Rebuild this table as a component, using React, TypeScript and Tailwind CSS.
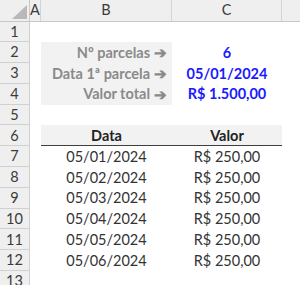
const font = { fontFamily: "Lato, 'Open Sans', sans-serif" };

const parcelas = [
  "05/01/2024",
  "05/02/2024",
  "05/03/2024",
  "05/04/2024",
  "05/05/2024",
  "05/06/2024",
];

const RowNum = ({ n }: { n: number }) => (
  <div className="w-[30px] shrink-0 h-full bg-[#efefef] border-r border-b border-[#d0d0d0] flex items-center justify-center text-[14.5px] text-[#3b3b3b]">
    {n}
  </div>
);

const Row = ({ n, b, c, bClass = "", cClass = "" }: { n: number; b?: React.ReactNode; c?: React.ReactNode; bClass?: string; cClass?: string }) => (
  <div className="flex h-[20.8px]">
    <RowNum n={n} />
    <div className="w-[11px] shrink-0" />
    <div className={"w-[131px] shrink-0 flex items-center " + bClass}>{b}</div>
    <div className={"w-[110px] shrink-0 flex items-center justify-center " + cClass}>{c}</div>
    <div className="flex-1" />
  </div>
);

const Label = ({ text }: { text: string }) => (
  <div className="w-full flex justify-end items-center pr-[5px] gap-[4px] font-bold text-[#8a8a8a] text-[14.5px]">
    <span>{text}</span>
    <span className="text-[15px]">➔</span>
  </div>
);

export default function App() {
  return (
    <div className="w-[300px] h-[285px] bg-white overflow-hidden" style={font}>
      {/* column headers */}
      <div className="flex h-[21.5px] bg-[#efefef] border-b border-[#c8c8c8] text-[14.5px] text-[#3b3b3b]">
        <div className="w-[30px] shrink-0 border-r border-[#c8c8c8] relative">
          <svg className="absolute left-[12px] top-[5px]" width="15" height="14" viewBox="0 0 15 14">
            <polygon points="15,0 15,14 0,14" fill="#b9b9b9" />
          </svg>
        </div>
        <div className="w-[11px] shrink-0 border-r border-[#d4d4d4] flex items-center justify-center">A</div>
        <div className="w-[131px] shrink-0 border-r border-[#d4d4d4] flex items-center justify-center">B</div>
        <div className="w-[110px] shrink-0 border-r border-[#d4d4d4] flex items-center justify-center">C</div>
        <div className="flex-1" />
      </div>

      <Row n={1} />
      <Row n={2} bClass="bg-[#f2f2f2]" b={<Label text="Nº parcelas" />} cClass="font-bold text-[#1a1aff] text-[14.5px]" c="6" />
      <Row n={3} bClass="bg-[#f2f2f2]" b={<Label text="Data 1ª parcela" />} cClass="font-bold text-[#1a1aff] text-[14.5px]" c="05/01/2024" />
      <Row n={4} bClass="bg-[#f2f2f2]" b={<Label text="Valor total" />} cClass="font-bold text-[#1a1aff] text-[14.5px]" c="R$ 1.500,00" />
      <Row n={5} />
      <Row
        n={6}
        bClass="bg-[#f2f2f2] border-b-[1.5px] border-[#3f3f3f] justify-center font-bold text-[14.5px] text-[#222]"
        b="Data"
        cClass="bg-[#f2f2f2] border-b-[1.5px] border-[#3f3f3f] font-bold text-[14.5px] text-[#222]"
        c="Valor"
      />
      {parcelas.map((d, i) => (
        <Row
          key={d}
          n={7 + i}
          bClass="justify-center text-[14.5px] text-[#333]"
          b={d}
          cClass="text-[14.5px] text-[#333]"
          c="R$ 250,00"
        />
      ))}
      <Row n={13} />
    </div>
  );
}
